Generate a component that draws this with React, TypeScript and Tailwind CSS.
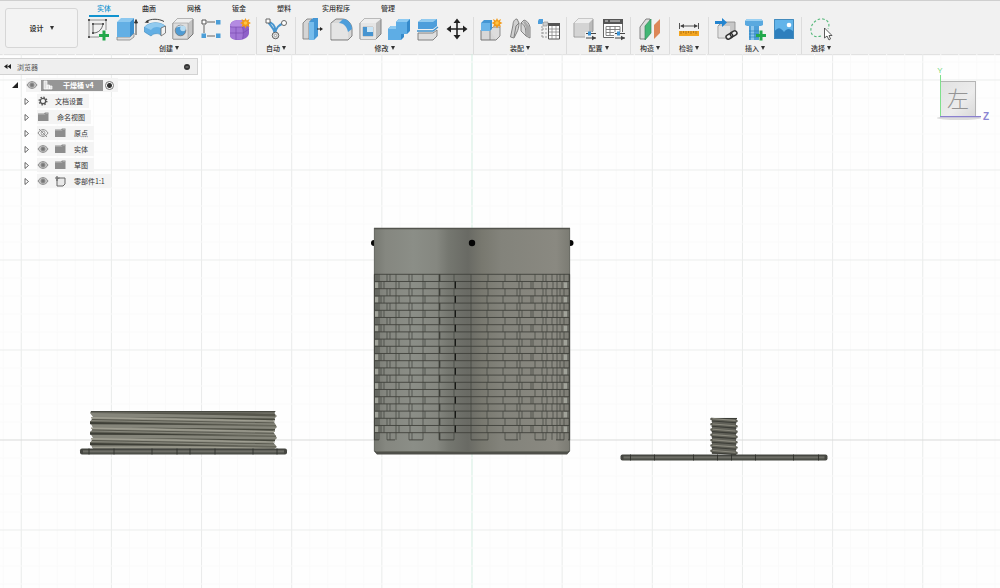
import React from 'react';
import { clsx } from 'clsx';

const TABS = ['实体', '曲面', '网格', '钣金', '塑料', '实用程序', '管理'];

/* ---------- Toolbar icons ---------- */

function Icon({ children }: { children: React.ReactNode }) {
    return <svg viewBox="0 0 24 24" className="size-6 shrink-0" fill="none" aria-hidden="true">{children}</svg>;
}

const SketchIcon = () => (
    <Icon>
        <path d="M4 3H20M3 4V20M20 4V13M4 20H13" stroke="#777" strokeWidth=".8" />
        <path d="M7 7V16M7 7H17M7 16C13 16 16 12 17 7" stroke="#555" strokeWidth=".9" />
        <path d="M2 2h2v2H2zM19 2h2v2h-2zM2 19h2v2H2zM6 6h2v2H6zM16 6h2v2h-2zM6 15h2v2H6z" fill="#555" />
        <path d="M16.500 13.500h3v3.500h3.500v3h-3.500v3.500h-3V20H13v-3h3.500z" fill="#22a84b" />
    </Icon>
);

const ExtrudeIcon = () => (
    <Icon>
        <path d="M3 20h13l4-4v4l-4 3H3z" fill="#ddd" stroke="#777" strokeWidth=".7" />
        <path d="M3 5h13v15H3z" fill="#63afe4" />
        <path d="M3 5l4-4h13l-4 4z" fill="#8cc8ef" />
        <path d="M16 5l4-4v15l-4 4z" fill="#3a8fcf" />
        <path d="M22 18V4M20.500 6L22 2.500 23.500 6z" stroke="#333" strokeWidth=".9" fill="#333" />
    </Icon>
);

const RevolveIcon = () => (
    <Icon>
        <path d="M3 4.500C8 1.500 16 1.500 21 4.500" stroke="#444" />
        <path d="M1.500 5.500l4-2.500v3z" fill="#333" />
        <path d="M1.500 10C7 4.500 17 4.500 22 9l-4 9c-3-2-7-2-10 1L1.500 15z" fill="#63afe4" stroke="#3586bd" strokeWidth=".6" />
        <path d="M1.500 10C7 4.500 17 4.500 22 9l-4 2C14 9 10 10 8 13z" fill="#91caef" />
        <path d="M18 11l4.500-2v7L18 19z" fill="#f2f2f2" stroke="#666" strokeWidth=".8" />
    </Icon>
);

const HoleIcon = () => (
    <Icon>
        <path d="M2 6l4-4h16v15l-5 5H2z" fill="#c4c4c4" stroke="#777" />
        <path d="M2 6l4-4h16l-5 4z" fill="#eee" />
        <path d="M2 6h15v16H2z" fill="#ddd" stroke="#999" strokeWidth=".6" />
        <circle cx="9.500" cy="13.500" r="5.300" fill="#4f9bd3" stroke="#777" strokeWidth=".8" />
        <path d="M5 11a5.300 5.300 0 0 1 9.500 1c-3-3-6-3-9.500-1z" fill="#fff" />
        <circle cx="12" cy="11.500" r="2.800" fill="#b8dcf2" />
    </Icon>
);

const PatternIcon = () => (
    <Icon>
        <path d="M8 5h8M5 8v8M8 19h8" stroke="#555" strokeWidth=".9" />
        <path d="M3 3h4v4H3z" fill="#fff" stroke="#555" />
        <path d="M17 3h4.500v4.500H17zM2.500 16.500H7V21H2.500zM17 16.500h4.500V21H17z" fill="#4b9ed8" />
    </Icon>
);

const FormIcon = () => (
    <Icon>
        <path d="M2 9c0-4 4-6 9-6s9 0 10 3v10c0 4-5 7-10 7s-9-1-9-5z" fill="#8f60c9" />
        <path d="M2 9c1-4 4-6 9-6s8 1 9 4l-5 3H4z" fill="#b48be2" />
        <path d="M2 10h12.500c1 4 1 8 0 12C8 23.500 2 22 2 18z" fill="#a276d6" />
        <path d="M2.500 10h12c1 4 1 8 0 12M8 10v13M2 16h13l6-4M14.500 10l6-4" stroke="#7646ad" strokeWidth=".6" />
        <Spark x={17.500} y={6} />
    </Icon>
);

function Spark({ x, y }: { x: number; y: number }) {
    return (
        <g transform={`translate(${x} ${y})`}>
            <path d="M0-5L1.200-2.500 4-4 3-1.200 5.500 0 3 1.200 4 4 1.200 3 0 5.500-1.200 3-4 4-3 1.200-5.500 0-3-1.200-4-4-1.200-2.500z" fill="#f29a18" />
            <circle r="1.800" fill="#ffc443" />
        </g>
    );
}

const AutomateIcon = () => (
    <Icon>
        <path d="M4 4C5 9 10 9 11 17M20 6C15 8 12 10 11 17M6 5c5 3 6 6 5 13" stroke="#4795cf" strokeWidth="2" />
        <path d="M2 2h4v4H2z" fill="#fff" stroke="#666" />
        <circle cx="20" cy="6" r="2.500" fill="#fff" stroke="#666" />
        <circle cx="11.500" cy="18.500" r="3.300" fill="#ddd" stroke="#666" />
        <circle cx="11.500" cy="18.500" r="1.200" fill="#fff" stroke="#777" strokeWidth=".6" />
    </Icon>
);

const PressPullIcon = () => (
    <Icon>
        <path d="M3 6l4-4h5l-3 4v16H3z" fill="#d5d5d5" stroke="#777" strokeWidth=".8" />
        <path d="M9 5l4-4h5v18l-4 4H9z" fill="#4597d5" />
        <path d="M9 5h5v18H9z" fill="#76bcec" />
        <path d="M17 12h4" stroke="#222" />
        <path d="M20 10l3 2-3 2z" fill="#222" />
    </Icon>
);

const FilletIcon = () => (
    <Icon>
        <path d="M2 6l5-4h6c6 0 10 5 10 10v7l-4 4H2z" fill="#d8d8d8" stroke="#777" strokeWidth=".9" />
        <path d="M2.500 6H9c6 0 10 5 10 11v5H2.500z" fill="#e4e4e4" />
        <path d="M10 6l4-4c5 0 9 5 9 10l-4 3C18 10 15 6 10 6z" fill="#4d9edb" />
    </Icon>
);

const ShellIcon = () => (
    <Icon>
        <path d="M2 6l4-4h17v15l-5 5H2z" fill="#bcbcbc" stroke="#777" strokeWidth=".9" />
        <path d="M2 6l4-4h17l-5 4z" fill="#eee" />
        <path d="M2.500 6H18v16H2.500z" fill="#e5e5e5" />
        <path d="M5 10h10v9H5z" fill="#fff" stroke="#888" strokeWidth=".5" />
        <path d="M5 10h4v5h6v4H5z" fill="#4794d0" />
        <path d="M9 10h6v5H9z" fill="#cbe6f7" />
    </Icon>
);

const CombineIcon = () => (
    <Icon>
        <path d="M9 5l3-3h11v12l-3 3h-3v3l-3 3H1V12l3-3h5z" fill="#358acb" />
        <path d="M9 5h11v12h-6v6H1V12h8z" fill="#5eade5" />
        <path d="M9 5l3-3h11l-3 3zM1 12l3-3h5v3z" fill="#8dcaf2" />
    </Icon>
);

const SplitIcon = () => (
    <Icon>
        <path d="M2 5l4-3h15v7l-4 3H2z" fill="#4d9edb" />
        <path d="M2 5l4-3h15l-4 3z" fill="#91caef" />
        <path d="M2 16h15l4-3v6l-4 4H2z" fill="#dedede" stroke="#777" strokeWidth=".9" />
        <path d="M1 14h16l5-4" stroke="#3e91cd" strokeWidth="1.300" />
    </Icon>
);

const MoveIcon = () => (
    <Icon>
        <path d="M12 4v16M4 12h16" stroke="#222" strokeWidth="1.600" />
        <path d="M12 1.500l3.500 4.500h-7zM12 22.500L8.500 18h7zM1.500 12L6 8.500v7zM22.500 12L18 15.500v-7z" fill="#222" />
    </Icon>
);

const NewComponentIcon = () => (
    <Icon>
        <path d="M2 13h18v6l-3 4H2z" fill="#d8d8d8" stroke="#777" />
        <path d="M11 14v9M11 13l3-3h7v9l-4 4" stroke="#777" strokeWidth=".8" fill="#ddd" />
        <path d="M2 6l3-3h8v9l-2 2H2z" fill="#4496d4" />
        <path d="M2 6h9v8H2z" fill="#6ab4e8" />
        <Spark x={18} y={6} />
    </Icon>
);

const JointIcon = () => (
    <Icon>
        <path d="M2.500 20L5 8c0-4 2-6 4-6l2 4c0 4-1 7-2 9l-3 6z" fill="#d0d0d0" stroke="#777" strokeWidth=".9" />
        <path d="M13 6l3-3c3 1 5 3 6 7v11l-4-2-5-5z" fill="#d8d8d8" stroke="#777" strokeWidth=".9" />
        <path d="M6 20L8 9l3-3M13 6c4 2 5 5 5 13" stroke="#777" strokeWidth=".9" />
        <path d="M15 5l3 5v8l3 2V9l-4-5z" fill="#aaa" />
    </Icon>
);

const BomIcon = () => (
    <Icon>
        <path d="M1 4l1-2h4v4L5 7H1z" fill="#4c9ddb" />
        <path d="M6 6l1-1h4l-1 4H6z" fill="#ccc" stroke="#888" strokeWidth=".6" />
        <path d="M5 9v12M5 12h5M5 16h5M5 20h5" stroke="#999" strokeDasharray="2 1" />
        <path d="M11.500 7h11v15h-11z" fill="#fff" stroke="#555" />
        <path d="M11 6h12v3H11z" fill="#555" />
        <path d="M12 12h10M12 15h10M12 18.500h10M15 9v13M19 9v13" stroke="#888" strokeWidth=".8" />
    </Icon>
);

const Sliders = () => (
    <>
        <path d="M13 15h11v9H13z" fill="#f1f1f1" />
        <path d="M14 16.500h10M14 21h10" stroke="#444" />
        <path d="M16 14.500h3v4h-3z" fill="#3b94d6" />
        <path d="M20 18.800l4 2.200-4 2.200z" fill="#444" />
    </>
);

const ConfigureIcon = () => (
    <Icon>
        <path d="M2 6l4-4h15v12l-5 6H2z" fill="#bbb" stroke="#888" strokeWidth=".8" />
        <path d="M2 6l4-4h15l-4 4z" fill="#eee" />
        <path d="M2.500 6H17v13.500H2.500z" fill="#d4d4d4" />
        <Sliders />
    </Icon>
);

const ConfigTableIcon = () => (
    <Icon>
        <path d="M2.500 2.500h19v18h-19z" fill="#fff" stroke="#666" />
        <path d="M2 2h20v5H2z" fill="#555" />
        <path d="M4 4h3M9 4h10" stroke="#ddd" />
        <path d="M5 9.500h14v9H5zM5 12.500h14M5 15.500h14M9 9v9M14 9v9" stroke="#777" strokeWidth=".9" />
        <Sliders />
    </Icon>
);

const ConstructIcon = () => (
    <Icon>
        <path d="M2 10l6-8h4v13l-5 7H2z" fill="#ddd" stroke="#777" strokeWidth=".9" />
        <path d="M7 9l6-7v14l-6 7z" fill="#42b674" stroke="#36895c" strokeWidth=".7" />
        <path d="M16 8l6-6v14l-6 6z" fill="#dd8758" />
    </Icon>
);

const MeasureIcon = () => (
    <Icon>
        <path d="M2.500 6v6M21.500 6v6M4 9h16" stroke="#555" />
        <path d="M3 9l4-2v4zM21 9l-4-2v4z" fill="#444" />
        <path d="M2 14h20v5H2z" fill="#f3a51f" />
        <path d="M4 14v3M6.500 14v2M9 14v3M11.500 14v2M14 14v3M16.500 14v2M19 14v3" stroke="#9c6515" strokeWidth=".7" />
    </Icon>
);

const InsertLinkIcon = () => (
    <Icon>
        <path d="M4 9l4-4h13v11l-5 5H4z" fill="#c7c7c7" stroke="#888" strokeWidth=".8" />
        <path d="M4.500 9H16v11.500H4.500z" fill="#e2e2e2" />
        <path d="M1 4h7V1l5 4.500L8 10V7H1z" fill="#2384cf" />
        <g stroke="#f1f1f1" strokeWidth="4"><path d="M13 19.500l4-2.500M18 18l4-3" /></g>
        <g stroke="#333" strokeWidth="1.500" transform="rotate(-32 17.500 18)">
            <rect x="11.500" y="15.800" width="7" height="4.400" rx="2.200" />
            <rect x="16.500" y="15.800" width="7" height="4.400" rx="2.200" />
        </g>
    </Icon>
);

const FastenerIcon = () => (
    <Icon>
        <path d="M2 4l2-2h14l2 2v4l-2 1H4L2 8z" fill="#5aa9df" />
        <path d="M2 4l2-2h14l2 2z" fill="#9ad0f2" />
        <path d="M6 9h10v14H6z" fill="#4e9fd8" />
        <path d="M8 9h3v14H8z" fill="#8bc6ed" />
        <path d="M6 14h10M6 17h10M6 20h10" stroke="#2f7fb9" strokeWidth=".7" />
        <path d="M16.500 13.500h3v3.500h3.500v3h-3.500v3.500h-3V20H13v-3h3.500z" fill="#22a84b" />
    </Icon>
);

const ImageIcon = () => (
    <Icon>
        <path d="M2 2h20v20H2z" fill="#62b4ea" />
        <path d="M2 15c4-5 6-5 10 0 3-4 6-4 10 0v7H2z" fill="#2e7fbd" />
        <circle cx="17" cy="8" r="2.300" fill="#fff" />
        <path d="M2.500 2.500h19v19h-19z" stroke="#438bbd" />
    </Icon>
);

const SelectIcon = () => (
    <Icon>
        <path d="M12 19C6 21 2 18 2 14 1 7 8 1 14 2c6 1 7 6 5 10" stroke="#54b779" strokeWidth="1.100" strokeDasharray="2.500 2" />
        <path d="M15.500 11v10l2.500-2 2 4 1.500-1-1.500-3.500h3z" fill="#fff" stroke="#333" strokeWidth=".8" />
    </Icon>
);

type Tool = { name: string; icon: React.ReactNode };
type Group = { label: string; width: string; tools: Tool[] };

const GROUPS: Group[] = [
    {
        label: '创建',
        width: 'w-[175px]',
        tools: [
            { name: '创建草图', icon: <SketchIcon /> },
            { name: '拉伸', icon: <ExtrudeIcon /> },
            { name: '旋转', icon: <RevolveIcon /> },
            { name: '孔', icon: <HoleIcon /> },
            { name: '阵列', icon: <PatternIcon /> },
            { name: '创建形状', icon: <FormIcon /> },
        ],
    },
    { label: '自动', width: 'w-[39px]', tools: [{ name: '自动建模', icon: <AutomateIcon /> }] },
    {
        label: '修改',
        width: 'w-[178px]',
        tools: [
            { name: '按拉', icon: <PressPullIcon /> },
            { name: '圆角', icon: <FilletIcon /> },
            { name: '抽壳', icon: <ShellIcon /> },
            { name: '合并', icon: <CombineIcon /> },
            { name: '分割', icon: <SplitIcon /> },
            { name: '移动', icon: <MoveIcon /> },
        ],
    },
    {
        label: '装配',
        width: 'w-[93px]',
        tools: [
            { name: '新建零部件', icon: <NewComponentIcon /> },
            { name: '联接', icon: <JointIcon /> },
            { name: '明细表', icon: <BomIcon /> },
        ],
    },
    {
        label: '配置',
        width: 'w-16',
        tools: [
            { name: '配置设计', icon: <ConfigureIcon /> },
            { name: '配置表', icon: <ConfigTableIcon /> },
        ],
    },
    { label: '构造', width: 'w-[39px]', tools: [{ name: '偏移平面', icon: <ConstructIcon /> }] },
    { label: '检验', width: 'w-[39px]', tools: [{ name: '测量', icon: <MeasureIcon /> }] },
    {
        label: '插入',
        width: 'w-[93px]',
        tools: [
            { name: '插入衍生', icon: <InsertLinkIcon /> },
            { name: '插入紧固件', icon: <FastenerIcon /> },
            { name: '画布', icon: <ImageIcon /> },
        ],
    },
    { label: '选择', width: 'w-[39px]', tools: [{ name: '选择工具', icon: <SelectIcon /> }] },
];

function Caret() {
    return <svg viewBox="0 0 4 4" className="size-1" aria-hidden="true"><path d="M0 0h4L2 4z" fill="#333" /></svg>;
}

function Toolbar() {
    return (
        <header className="flex bg-[#f1f1f1] border-t border-[#cfcfcf] shadow-[0_1px_1px_#e2e2e2]">
            <button className="flex items-center justify-center gap-1.5 w-[73px] h-10 mt-[7px] ml-[5px] rounded-[3px] border border-[#d6d6d6] bg-[#f3f3f3] font-bold">
                设计 <Caret />
            </button>
            <div className="ml-1">
                <nav className="flex gap-[15px] ml-[7px]">
                    {TABS.map((tab, i) => (
                        <button
                            key={tab}
                            className={clsx('h-4 px-2 border-b-2 font-medium', i === 0 ? 'border-[#1193cf] text-[#1193cf]' : 'border-transparent')}
                        >
                            {tab}
                        </button>
                    ))}
                </nav>
                <div className="flex">
                    {GROUPS.map((group) => (
                        <div key={group.label} className={clsx('shrink-0 px-0.5 border-r border-[#dcdcdc] last:border-transparent', group.width)}>
                            <div className="flex">
                                {group.tools.map((tool) => (
                                    <button key={tool.name} aria-label={tool.name} className="flex-1 flex justify-center">
                                        {tool.icon}
                                    </button>
                                ))}
                            </div>
                            <button className="flex items-center justify-center gap-0.5 w-full h-3 mt-px font-medium">
                                {group.label}
                                <Caret />
                            </button>
                        </div>
                    ))}
                </div>
            </div>
        </header>
    );
}

/* ---------- Browser tree ---------- */

function Eye({ off }: { off?: boolean }) {
    return (
        <svg viewBox="0 0 12 10" className="w-3 h-2.5" fill="none" aria-hidden="true">
            <path d="M1 5c2.500-4.500 7.500-4.500 10 0-2.500 4.500-7.500 4.500-10 0z" stroke="#8c8c8c" strokeWidth="1" fill={off ? 'none' : '#c4c4c4'} />
            <circle cx="6" cy="5" r="2" fill={off ? 'none' : '#777'} stroke="#8c8c8c" strokeWidth=".8" />
            {off && <path d="M2 1l8 8" stroke="#888" strokeWidth=".9" />}
        </svg>
    );
}

function Folder() {
    return (
        <svg viewBox="0 0 12 10" className="w-3 h-2.5" aria-hidden="true">
            <path d="M1 1.500h6l1-1h3.500V9H1z" fill="#8d8d8d" />
            <path d="M1 2.500h7l1-1h2.500" stroke="#b5b5b5" strokeWidth=".6" fill="none" />
        </svg>
    );
}

function Gear() {
    return (
        <svg viewBox="0 0 12 10" className="w-3 h-2.5" fill="none" stroke="#555" aria-hidden="true">
            <circle cx="6" cy="5" r="2.700" strokeWidth="1.300" />
            <circle cx="6" cy="5" r="3.800" strokeWidth="1.400" strokeDasharray="1.400 1.580" />
        </svg>
    );
}

function ComponentIcon() {
    return (
        <svg viewBox="0 0 12 12" className="size-3" fill="none" stroke="#666" aria-hidden="true">
            <path d="M3 4.500l1.500-1.500H11v6L9 11H3z" fill="#e8e8e8" />
            <path d="M3 1v5M1 3h4.500" strokeWidth="1.200" />
        </svg>
    );
}

type Node = { label: string; icon: React.ReactNode; eye?: 'on' | 'off' };

const NODES: Node[] = [
    { label: '文档设置', icon: <Gear /> },
    { label: '命名视图', icon: <Folder /> },
    { label: '原点', icon: <Folder />, eye: 'off' },
    { label: '实体', icon: <Folder />, eye: 'on' },
    { label: '草图', icon: <Folder />, eye: 'on' },
    { label: '零部件1:1', icon: <ComponentIcon />, eye: 'on' },
];

function BrowserPanel() {
    return (
        <aside className="absolute left-0 top-1 w-[198px]">
            <div className="flex items-center h-[17px] pl-1 pr-[7px] bg-[#efefef] border border-l-0 border-[#d2d2d2] text-[#555]">
                <button aria-label="收起">
                    <svg viewBox="0 0 7 5" className="w-[7px] h-[5px]" aria-hidden="true"><path d="M3.500 0v5L0 2.500zM7 0v5L3.500 2.500z" fill="#222" /></svg>
                </button>
                <h2 className="ml-1.5 mr-auto">浏览器</h2>
                <button aria-label="最小化">
                    <svg viewBox="0 0 6 6" className="size-1.5" aria-hidden="true">
                        <circle cx="3" cy="3" r="3" fill="#333" />
                        <path d="M1.500 3h3" stroke="#aaa" strokeWidth=".8" />
                    </svg>
                </button>
            </div>

            <div className="flex items-center h-4 mt-0.5 ml-3">
                <button aria-label="折叠">
                    <svg viewBox="0 0 6 6" className="size-1.5" aria-hidden="true"><path d="M6 0v6H0z" fill="#222" /></svg>
                </button>
                <div className="flex items-center h-3.5 ml-2 pr-1 bg-[#f4f4f4]">
                    <Eye />
                    <button className="flex items-center gap-2.5 h-[11px] w-[62px] ml-[3px] pl-0.5 bg-[#969696] text-white font-bold whitespace-nowrap">
                        <svg viewBox="0 0 10 10" className="size-2.5" fill="#ddd" stroke="#fff" strokeWidth=".7" aria-hidden="true">
                            <path d="M1 1h3v8H1zM4 5h2.500v4H4zM6.500 6H9v3H6.500z" />
                        </svg>
                        干燥桶 v4
                    </button>
                    <input
                        type="radio"
                        name="active-component"
                        defaultChecked
                        aria-label="激活零部件"
                        className="appearance-none size-[9px] ml-0.5 rounded-full border border-[#777] bg-[radial-gradient(circle,#333_0_2px,#fff_3px)]"
                    />
                </div>
            </div>

            <ul className="ml-6">
                {NODES.map((node) => (
                    <li key={node.label} className="flex items-center h-4">
                        <button aria-label={`展开 ${node.label}`}>
                            <svg viewBox="0 0 6 7" className="w-1.5 h-[7px]" aria-hidden="true"><path d="M1 .5L4.500 3.500 1 6.500z" fill="#fff" stroke="#444" strokeWidth=".8" /></svg>
                        </button>
                        <div className="flex items-center h-3.5 ml-[7px] pr-1.5 bg-[#f4f4f4]">
                            {node.eye && <button aria-label="可见性" className="mr-[5px]"><Eye off={node.eye === 'off'} /></button>}
                            {node.icon}
                            <span className={node.label === '文档设置' ? 'ml-1.5' : 'ml-2'}>{node.label}</span>
                        </div>
                    </li>
                ))}
            </ul>
        </aside>
    );
}

/* ---------- 3D viewport ---------- */

// vertical brick joints, measured from the left edge of the drum
const EVEN_JOINTS = [3, 5, 13, 16, 22, 35, 38, 49, 65, 66, 80, 97, 114, 131, 143, 146, 161, 169, 172, 178, 183, 186, 190];
const ODD_JOINTS = [5, 7, 10, 22, 25, 36, 49, 51, 65, 81, 97, 113, 129, 145, 148, 157, 159, 168, 173, 179, 183, 188, 194];
const FEET = [[0, 5], [13, 21], [35, 49], [65, 80], [97, 114], [131, 144], [161, 172], [182, 190], [194, 196]];
const ROWS = 23;
const ROW_H = 7.2;

function Grid() {
    const lines: React.ReactNode[] = [];
    for (let i = -26; i <= 29; i++) {
        const x = 472 + i * 18.03;
        lines.push(<path key={`v${i}`} d={`M${x} 54V588`} stroke={i === 0 ? '#d3eee1' : i % 5 === 0 ? '#e9ebea' : '#fafafa'} />);
    }
    for (let i = -21; i <= 8; i++) {
        const y = 440 + i * 18;
        lines.push(<path key={`h${i}`} d={`M0 ${y}H1000`} stroke={i === 0 ? '#d9dad9' : i % 5 === 0 ? '#ebedec' : '#fafafa'} />);
    }
    return <g>{lines}</g>;
}

function Drum() {
    return (
        <g>
            <circle cx="374" cy="243" r="3" fill="#050505" />
            <circle cx="570.500" cy="243" r="3" fill="#050505" />
            <path d="M374 228H570V451L567 454H377L374 451z" fill="url(#drum)" />
            <path d="M374 228.500H570" stroke="#53544e" strokeWidth="1.500" />
            <path d="M374 451H570L567 454.500H377z" fill="#4e4f49" />
            <path d="M376 451.500H568" stroke="#77786f" strokeWidth=".6" />
            <path d="M374.300 228V451M569.700 228V451" stroke="#5e605a" strokeWidth=".6" />
            <circle cx="472" cy="243" r="3.200" fill="#050505" />
            <g transform="translate(374 274.300)" stroke="#41423c" strokeWidth=".9">
                {Array.from({ length: ROWS }, (_, row) => {
                    const y = row * ROW_H;
                    const odd = row % 2 === 1;
                    const joints = odd ? ODD_JOINTS : EVEN_JOINTS;
                    return (
                        <g key={row}>
                            {odd && <path d={`M1 ${y + 1}h3.500v5.500H1zM190 ${y + 1}h3.500v5.500h-3.500z`} fill="#a0a299" stroke="none" />}
                            <path d={`M0 ${y}H196`} />
                            <path d={joints.map((x) => `M${x} ${y}V${y + ROW_H}`).join('')} strokeWidth=".7" />
                            {odd
                                ? <path d={`M81.300 ${y}V${y + ROW_H}`} stroke="#141512" strokeWidth="1.300" />
                                : <path d={`M65.500 ${y}V${y + ROW_H}M.8 ${y}V${y + ROW_H}M195.200 ${y}V${y + ROW_H}`} stroke="#3b3c36" />}
                        </g>
                    );
                })}
                <path d={FEET.map(([a, b]) => `M${a} ${ROWS * ROW_H}H${b}`).join('')} />
                <path d={`M0.400 0V${ROWS * ROW_H}M195.600 0V${ROWS * ROW_H}`} />
            </g>
        </g>
    );
}

function Plate({ x, y, joints }: { x: number; y: number; joints: number[] }) {
    return (
        <g transform={`translate(${x} ${y})`}>
            <rect width="207" height="6" rx="2" fill="#454641" />
            <path d="M3 2.600H204" stroke="#7c7d75" strokeWidth="1.400" />
            <path d="M3 4.300H204" stroke="#63645d" />
            <path d={joints.map((j) => `M${j} 0V6`).join('')} stroke="#30312d" strokeWidth=".9" />
        </g>
    );
}

function Lid() {
    return (
        <g>
            <path d="M91 411H276L274 413 277 416 273 420 277 427 273 431 277 438 273 442 277 447 274 449H93L90 443 93 438 90 433 93 428 90 422 93 417 90 413z" fill="#85857a" />
            <path d="M91 411.700H275" stroke="#4a4b43" strokeWidth="1.600" />
            <path d="M92 413Q180 412 275 413.500V416.500Q180 414 92 413z" fill="#56564c" />
            {[421.500, 432, 442.500].map((y) => (
                <g key={y}>
                    <path d={`M91 ${y - 4.500}L275 ${y - 1}V${y}L91 ${y - 3}z`} fill="#a09f92" />
                    <path d={`M92 ${y - 2.500}L274 ${y + 1}V${y + 1.800}L92 ${y - 1.500}z`} fill="#56564c" />
                    <path d={`M90 ${y - .5}L276 ${y + 3.500}V${y + 5}L90 ${y + 2}z`} fill="#66665b" />
                    <path d={`M90 ${y + .5}L240 ${y + 3.200}L90 ${y + 2.800}z`} fill="#3e3f37" />
                    <path d={`M130 ${y - 4.500}L275 ${y - 3}V${y - 1.300}z`} fill="#48493f" />
                </g>
            ))}
            <path d="M93 447.500Q200 446 274 449" stroke="#a09f92" strokeWidth="1.200" fill="none" />
            <Plate x={80} y={448.500} joints={[9, 34, 72, 97, 110, 135, 173, 197]} />
        </g>
    );
}

function Screw() {
    return (
        <g>
            <path d="M712 418H736V454H712z" fill="#62625a" />
            <path d="M711 418.700H737" stroke="#3b3c36" strokeWidth="1.500" />
            {[0, 1, 2, 3, 4, 5, 6].map((i) => {
                const y = 419 + i * 5.300;
                return (
                    <g key={i} strokeLinecap="round">
                        <path d={`M711.500 ${y}L736.500 ${y + 2}`} stroke="#5f5f56" strokeWidth="2.600" />
                        <path d={`M713 ${y - .3}L735 ${y + 1.400}`} stroke="#8b8a7f" strokeWidth="1.100" />
                        <path d={`M712 ${y + 2}L736 ${y + 3.800}`} stroke="#3c3d37" strokeWidth="1.100" />
                    </g>
                );
            })}
            <Plate x={620.500} y={454.500} joints={[10, 34, 73, 97, 111, 135, 173, 198]} />
        </g>
    );
}

function ViewCube() {
    return (
        <g>
            <ellipse cx="959" cy="118" rx="22" ry="2" fill="#dcdcdc" />
            <rect x="940.500" y="81.500" width="35" height="35" fill="url(#cube)" stroke="#b5b5b5" />
            <path d="M940.500 75V117" stroke="#7fe08c" />
            <path d="M940 116.700H981" stroke="#8a80cf" strokeWidth="1.300" />
            <text x="958" y="107" textAnchor="middle" fontSize="22" fontWeight="300" fill="#949494">左</text>
            <text x="940" y="73" textAnchor="middle" fontSize="8" fill="#78d984" className="font-['Liberation_Sans',sans-serif]">Y</text>
            <text x="986" y="120" textAnchor="middle" fontSize="10" fontWeight="700" fill="#8b85d2" className="font-['Liberation_Sans',sans-serif]">Z</text>
        </g>
    );
}

function Viewport() {
    return (
        <svg viewBox="0 54 1000 534" className="block w-full" role="img" aria-label="模型视图">
            <defs>
                <linearGradient id="drum">
                    <stop offset="0" stopColor="#777972" />
                    <stop offset=".06" stopColor="#858780" />
                    <stop offset=".2" stopColor="#8b8e87" />
                    <stop offset=".32" stopColor="#858780" />
                    <stop offset=".38" stopColor="#757770" />
                    <stop offset=".48" stopColor="#696a64" />
                    <stop offset=".55" stopColor="#78786f" />
                    <stop offset=".65" stopColor="#83837b" />
                    <stop offset=".93" stopColor="#8a8981" />
                    <stop offset="1" stopColor="#7b7b73" />
                </linearGradient>
                <linearGradient id="cube" x2="1" y2="1">
                    <stop offset="0" stopColor="#e2e2e2" />
                    <stop offset=".6" stopColor="#ececec" />
                    <stop offset="1" stopColor="#d8d8d8" />
                </linearGradient>
            </defs>
            <Grid />
            <Drum />
            <Lid />
            <Screw />
            <ViewCube />
        </svg>
    );
}

export default function App() {
    return (
        <div className="flex flex-col min-h-screen overflow-hidden bg-[#fefefe] text-[7px] leading-3 text-[#333] font-['Noto_Sans_CJK_SC','Noto_Sans',sans-serif]">
            <Toolbar />
            <main className="relative flex-1">
                <Viewport />
                <BrowserPanel />
            </main>
        </div>
    );
}
